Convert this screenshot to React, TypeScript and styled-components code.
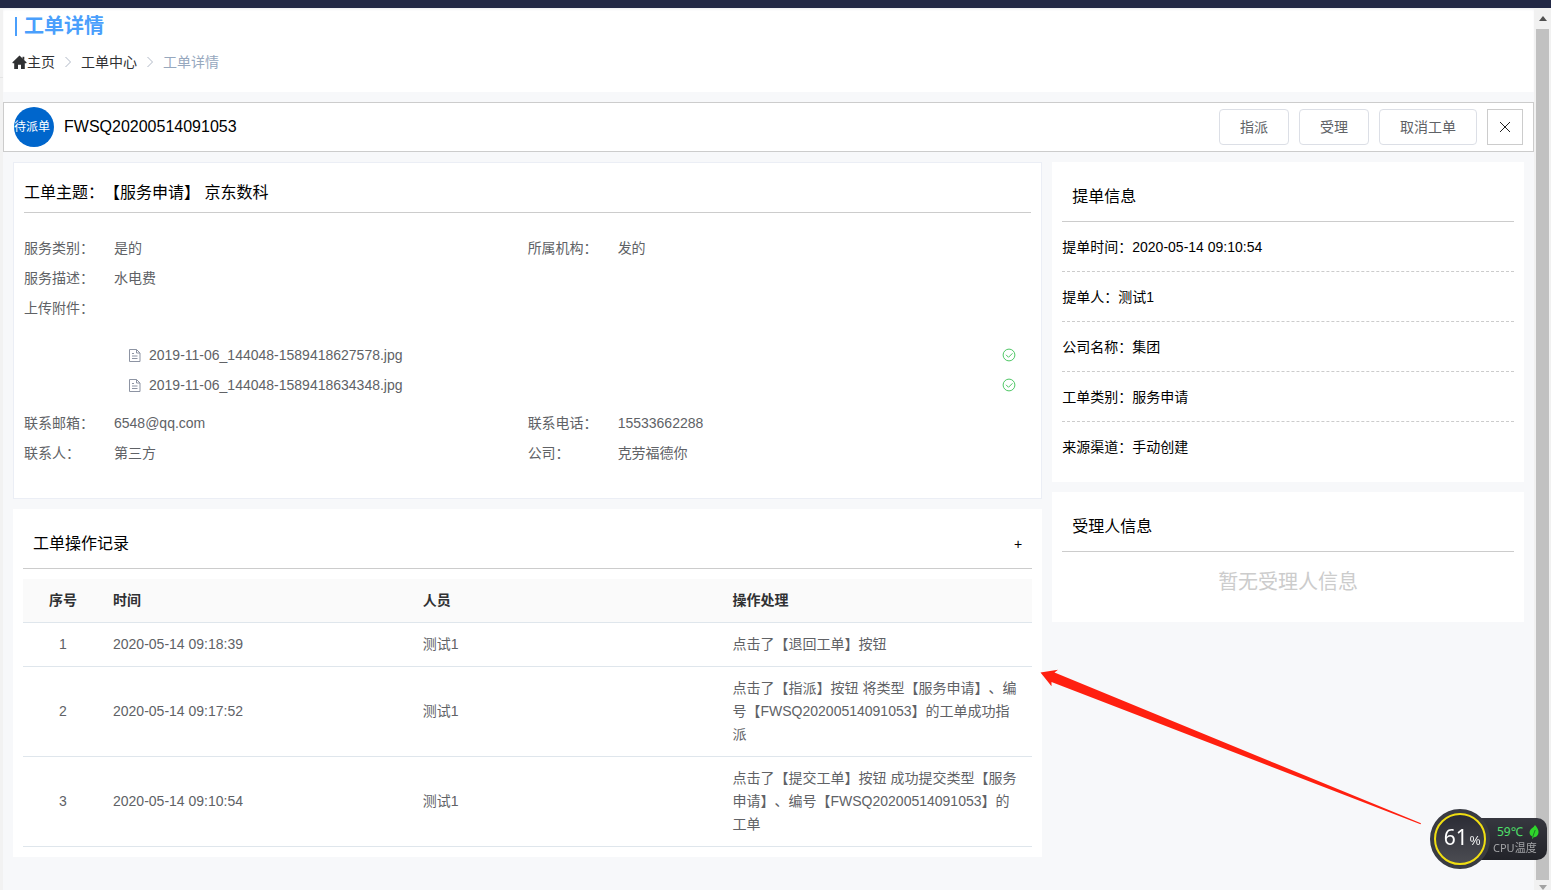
import React from "react";
import styled, { createGlobalStyle, css } from "styled-components";

const GlobalStyle = createGlobalStyle`
  *, *::before, *::after { box-sizing: border-box; }
  body {
    margin: 0;
    background: #f7f8fa;
    color: #000;
    font-family: "Liberation Sans", "Noto Sans CJK SC", sans-serif;
    font-size: 14px;
    line-height: 20px;
    text-spacing-trim: space-all;
  }
  button { font: inherit; cursor: pointer; }
  h1, h2, p, dl, dd, ul, ol { margin: 0; padding: 0; }
  ul, ol { list-style: none; }
`;

const Page = styled.div`
  position: relative;
  display: flex;
  flex-direction: column;
  min-height: 100vh;
`;

const TopBar = styled.div`
  height: 8px;
  background: #222845;
`;

const Shell = styled.div`
  flex: 1;
  display: grid;
  grid-template-columns: 3px minmax(0, 1fr) 17px;
`;

const SideEdge = styled.div`
  background: #f2f2f2;
  &::before {
    content: "";
    display: block;
    height: 70px;
    border-bottom: 1px solid #e4e4e4;
  }
`;

const ScrollTrack = styled.div`
  display: flex;
  flex-direction: column;
  align-items: center;
  background: #f1f1f1;
`;

const ScrollArrow = styled.div<{ $short?: boolean }>`
  display: flex;
  align-items: ${(p) => (p.$short ? "flex-end" : "center")};
  justify-content: center;
  height: ${(p) => (p.$short ? "10px" : "21px")};
`;

const ScrollThumb = styled.div`
  flex: 1;
  width: 13px;
  background: #c1c1c1;
`;

const Header = styled.header`
  height: 84px;
  padding: 5px 9px;
  background: #fff;
  box-shadow: inset 0 2px 3px -1px #e8e8ee;
`;

const PageTitle = styled.h1`
  display: flex;
  align-items: center;
  gap: 7px;
  height: 26px;
  padding-left: 3px;
  color: #4a9ffc;
  font-size: 20px;
  line-height: 26px;
  &::before {
    content: "";
    width: 2px;
    height: 19px;
    background: currentColor;
  }
`;

const Crumbs = styled.ol`
  display: flex;
  align-items: center;
  margin-top: 13px;
`;

const Crumb = styled.li`
  display: flex;
  align-items: center;
  color: #97a8be;
`;

const CrumbLink = styled.a`
  display: flex;
  align-items: center;
  color: #303133;
  text-decoration: none;
`;

const Chevron = styled.svg`
  margin: 0 10px;
`;

const OrderBar = styled.section`
  display: flex;
  align-items: center;
  gap: 10px;
  height: 50px;
  margin-top: 10px;
  padding: 0 10px;
  border: 1px solid #ccc;
  background: #fff;
`;

const Status = styled.span`
  width: 40px;
  height: 40px;
  border-radius: 50%;
  background: #06c;
  color: #fff;
  font-size: 12px;
  line-height: 40px;
  white-space: nowrap;
`;

const OrderNo = styled.span`
  flex: 1;
  font-size: 16px;
`;

const Button = styled.button`
  height: 36px;
  padding: 0 20px;
  border: 1px solid #dcdfe6;
  border-radius: 4px;
  background: #fff;
  color: #606266;
`;

const CloseButton = styled.button`
  display: flex;
  align-items: center;
  justify-content: center;
  width: 36px;
  height: 36px;
  padding: 0;
  border: 1px solid #ccc;
  background: #fff;
`;

const Columns = styled.div`
  display: grid;
  grid-template-columns: minmax(0, 24fr) minmax(0, 11fr);
  align-items: start;
  gap: 10px;
  padding: 10px;
`;

const Column = styled.div`
  display: grid;
  gap: 10px;
`;

const Card = styled.section<{ $outlined?: boolean }>`
  padding: 10px;
  background: #fff;
  ${(p) =>
    p.$outlined &&
    css`
      padding-bottom: 30px;
      border: 1px solid #ebeef5;
    `}
`;

const Subject = styled.h2`
  height: 40px;
  border-bottom: 1px solid #ccc;
  font-size: 16px;
  font-weight: 400;
  line-height: 39px;
`;

const CardTitle = styled.h2`
  display: flex;
  align-items: center;
  justify-content: space-between;
  height: 50px;
  padding: 0 10px;
  border-bottom: 1px solid #ccc;
  font-size: 16px;
  font-weight: 400;
`;

const PlusButton = styled.button`
  padding: 0;
  border: 0;
  background: none;
  font-size: 14px;
`;

const Fields = styled.dl`
  display: grid;
  grid-template-columns: 1fr 1fr;
  color: #606266;
  line-height: 30px;
`;

const Field = styled.div<{ $wide?: boolean }>`
  display: flex;
  ${(p) => p.$wide && "grid-column: 1 / -1;"}
  dt { width: 90px; }
`;

const Body = styled.div`
  padding-top: 20px;
`;

const Files = styled.ul`
  margin: 17px 0 8px 90px;
`;

const FileRow = styled.li`
  display: flex;
  align-items: center;
  height: 30px;
  padding: 0 15px;
  color: #606266;
`;

const FileLink = styled.a`
  display: flex;
  flex: 1;
  align-items: center;
  gap: 8px;
  color: inherit;
  text-decoration: none;
`;

const Table = styled.table`
  width: 100%;
  margin-top: 10px;
  border-collapse: separate;
  border-spacing: 0;
  table-layout: fixed;
  color: #606266;
  line-height: 23px;

  th, td {
    padding: 10px;
    border-bottom: 1px solid #dfe6ec;
    text-align: left;
  }
  th {
    background: #fafafa;
    color: #303133;
    font-weight: 700;
  }
  th:first-child, td:first-child {
    width: 80px;
    text-align: center;
  }
`;

const InfoRow = styled.div`
  display: flex;
  height: 50px;
  border-bottom: 1px dashed #ccc;
  line-height: 50px;
  &:last-child { border-bottom: 0; }
`;

const Empty = styled.p`
  padding: 10px 0;
  color: #ccc;
  font-size: 20px;
  line-height: 40px;
  text-align: center;
`;

const Pointer = styled.svg`
  position: absolute;
  top: 669px;
  right: 130px;
`;

const Monitor = styled.aside`
  position: fixed;
  right: 4px;
  bottom: 21px;
  display: flex;
  align-items: center;
`;

const Gauge = styled.div`
  z-index: 1;
  width: 60px;
  height: 60px;
  border: 4px solid #393b42;
  border-radius: 50%;
  background: #393b42;
`;

const GaugeFace = styled.div`
  display: flex;
  align-items: baseline;
  justify-content: center;
  gap: 2px;
  width: 52px;
  height: 52px;
  padding-left: 4px;
  border: 2px solid #f0de12;
  border-radius: 50%;
  background: linear-gradient(#2b2c35, #4b4c52);
  color: #fff;
  font-family: "Noto Sans", sans-serif;
  font-size: 21px;
  line-height: 44px;
  small {
    font-family: "Liberation Sans", sans-serif;
    font-size: 12px;
  }
`;

const Readout = styled.div`
  width: 72px;
  height: 42px;
  margin-left: -15px;
  padding: 6px 8px 0 18px;
  border-radius: 0 10px 10px 0;
  background: linear-gradient(#36373f, #222329);
  color: #a2a3a6;
  font-family: "Noto Sans", "Noto Sans CJK SC", sans-serif;
  font-size: 11px;
  line-height: 16px;
  white-space: nowrap;
`;

const Temperature = styled.div`
  display: flex;
  align-items: center;
  justify-content: space-between;
  padding-left: 4px;
  color: #4fe06a;
  font-size: 12px;
`;

const HomeIcon = () => (
  <svg width="15" height="14" viewBox="0 0 15 14" fill="#303133" aria-hidden="true">
    <path d="M7.500.5 14.700 7.600 14.200 8.300H12.800V14H9V9.800H6V14H2.200V8.300H.8L.3 7.600z" />
    <path d="M10.500 1.800h1.800v3h-1.800z" />
  </svg>
);

const CrumbSeparator = () => (
  <Chevron width="6" height="12" viewBox="0 0 6 12" fill="none" stroke="#b0b8c6" aria-hidden="true">
    <path d="M.5 1 5.5 6 .5 11" />
  </Chevron>
);

const DocumentIcon = () => (
  <svg width="12" height="13" viewBox="0 0 12 13" fill="none" stroke="#8d94a3" aria-hidden="true">
    <path d="M.5.5h7l3.500 3.500v8.500H.5zM7.500.5v3.500h3.500M3 4.500h2M3 7h5.500M3 9.500h5.500" />
  </svg>
);

const CheckIcon = () => (
  <svg width="14" height="14" viewBox="0 0 14 14" fill="none" stroke="#4fc766" role="img" aria-label="上传成功">
    <circle cx="7" cy="7" r="5.900" />
    <path d="m4 6.800 2.500 2.500L10.500 5.300" />
  </svg>
);

const Triangle = ({ d, fill }: { d: string; fill: string }) => (
  <svg width="8" height="5" viewBox="0 0 8 5" fill={fill} aria-hidden="true">
    <path d={d} />
  </svg>
);

const contact = [
  ["联系邮箱：", "6548@qq.com"],
  ["联系电话：", "15533662288"],
  ["联系人：", "第三方"],
  ["公司：", "克劳福德你"],
];

const files = ["2019-11-06_144048-1589418627578.jpg", "2019-11-06_144048-1589418634348.jpg"];

const records = [
  ["2020-05-14 09:18:39", "测试1", "点击了【退回工单】按钮"],
  ["2020-05-14 09:17:52", "测试1", "点击了【指派】按钮 将类型【服务申请】、编号【FWSQ20200514091053】的工单成功指派"],
  ["2020-05-14 09:10:54", "测试1", "点击了【提交工单】按钮 成功提交类型【服务申请】、编号【FWSQ20200514091053】的工单"],
];

const info = [
  ["提单时间：", "2020-05-14 09:10:54"],
  ["提单人：", "测试1"],
  ["公司名称：", "集团"],
  ["工单类别：", "服务申请"],
  ["来源渠道：", "手动创建"],
];

export default function App() {
  return (
    <Page>
      <GlobalStyle />
      <TopBar />
      <Shell>
        <SideEdge />
        <main>
          <Header>
            <PageTitle>工单详情</PageTitle>
            <nav>
              <Crumbs>
                <Crumb>
                  <CrumbLink href="#home"><HomeIcon />主页</CrumbLink>
                  <CrumbSeparator />
                </Crumb>
                <Crumb>
                  <CrumbLink href="#orders">工单中心</CrumbLink>
                  <CrumbSeparator />
                </Crumb>
                <Crumb aria-current="page">工单详情</Crumb>
              </Crumbs>
            </nav>
          </Header>

          <OrderBar>
            <Status>待派单</Status>
            <OrderNo>FWSQ20200514091053</OrderNo>
            <Button type="button">指派</Button>
            <Button type="button">受理</Button>
            <Button type="button">取消工单</Button>
            <CloseButton type="button" aria-label="关闭">
              <svg width="12" height="12" viewBox="0 0 12 12" stroke="#222" aria-hidden="true">
                <path d="M1 1 11 11M11 1 1 11" />
              </svg>
            </CloseButton>
          </OrderBar>

          <Columns>
            <Column>
              <Card $outlined>
                <Subject>工单主题：【服务申请】 京东数科</Subject>
                <Body>
                  <Fields>
                    <Field><dt>服务类别：</dt><dd>是的</dd></Field>
                    <Field><dt>所属机构：</dt><dd>发的</dd></Field>
                    <Field $wide><dt>服务描述：</dt><dd>水电费</dd></Field>
                    <Field $wide><dt>上传附件：</dt></Field>
                  </Fields>
                  <Files>
                    {files.map((name) => (
                      <FileRow key={name}>
                        <FileLink href="#file"><DocumentIcon />{name}</FileLink>
                        <CheckIcon />
                      </FileRow>
                    ))}
                  </Files>
                  <Fields>
                    {contact.map(([label, value]) => (
                      <Field key={label}><dt>{label}</dt><dd>{value}</dd></Field>
                    ))}
                  </Fields>
                </Body>
              </Card>

              <Card>
                <CardTitle>
                  工单操作记录
                  <PlusButton type="button">+</PlusButton>
                </CardTitle>
                <Table>
                  <thead>
                    <tr><th>序号</th><th>时间</th><th>人员</th><th>操作处理</th></tr>
                  </thead>
                  <tbody>
                    {records.map(([time, person, action], i) => (
                      <tr key={time}><td>{i + 1}</td><td>{time}</td><td>{person}</td><td>{action}</td></tr>
                    ))}
                  </tbody>
                </Table>
              </Card>
            </Column>

            <Column>
              <Card>
                <CardTitle>提单信息</CardTitle>
                <dl>
                  {info.map(([label, value]) => (
                    <InfoRow key={label}><dt>{label}</dt><dd>{value}</dd></InfoRow>
                  ))}
                </dl>
              </Card>
              <Card>
                <CardTitle>受理人信息</CardTitle>
                <Empty>暂无受理人信息</Empty>
              </Card>
            </Column>
          </Columns>
        </main>
        <ScrollTrack>
          <ScrollArrow><Triangle d="M0 5 4 0 8 5z" fill="#505050" /></ScrollArrow>
          <ScrollThumb />
          <ScrollArrow $short><Triangle d="M0 0 4 5 8 0z" fill="#a3a3a3" /></ScrollArrow>
        </ScrollTrack>
      </Shell>

      <Pointer width="381" height="156" viewBox="0 0 381 156" fill="#ff2010" aria-hidden="true">
        <path d="M.5 3.500 18 .8 14.500 3.600 381 154.200 380.500 155.200 11.500 13 11.500 17.200z" />
      </Pointer>

      <Monitor>
        <Gauge><GaugeFace>61<small>%</small></GaugeFace></Gauge>
        <Readout>
          <Temperature>
            59℃
            <svg width="10" height="14" viewBox="0 0 10 14" aria-hidden="true">
              <path d="M6 0C8 2 10 5 9.500 8 9 11 6.500 12.500 4.500 12.300L3.500 14C2.800 13 3 12 3.200 11.500 1 10.500 0 8.500.800 6 1.600 3.500 4.800 2.500 6 0z" fill="#2fd62b" />
              <path d="M3.500 12.500 6.200 5" stroke="#1b7a26" fill="none" />
            </svg>
          </Temperature>
          CPU温度
        </Readout>
      </Monitor>
    </Page>
  );
}
